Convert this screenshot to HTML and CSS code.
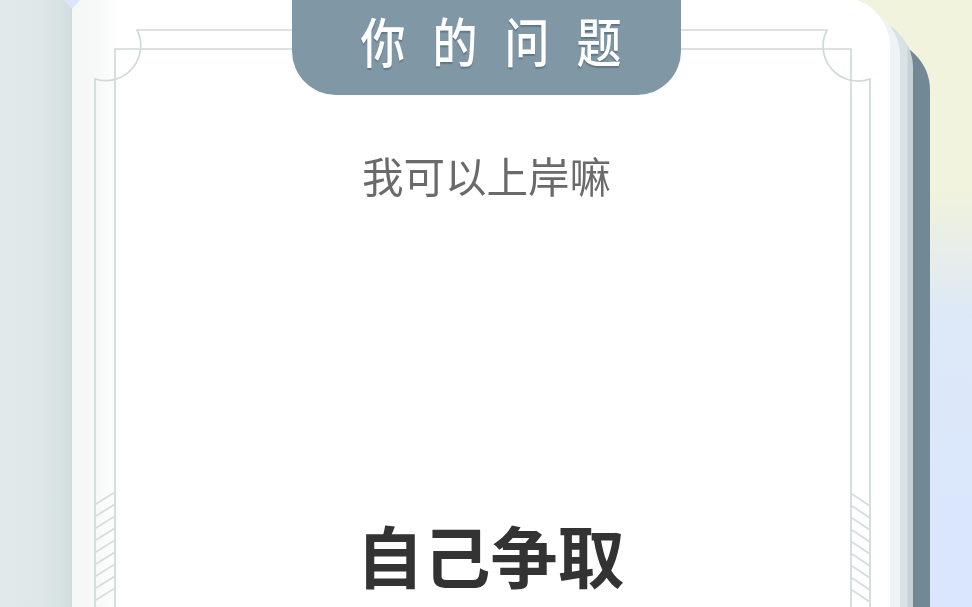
FILE: index.html
```html
<!DOCTYPE html>
<html lang="zh">
<head>
<meta charset="utf-8">
<title>你的问题</title>
<link rel="stylesheet" href="styles.css">
</head>
<body>
<div class="scene">
  <div class="spine"></div>
  <div class="notch"></div>
  <div class="layer layer-dark"></div>
  <div class="layer layer-gray"></div>
  <div class="layer layer-light"></div>
  <main class="page">
    <svg class="frame" viewBox="0 0 972 607" width="972" height="607" aria-hidden="true">
      <path d="M95 607V79A35 35 0 0 0 137 30H827A35 35 0 0 0 870 79V607" />
      <path d="M115 607V49H851V607" />
      <g class="hatch">
        <path d="M96 504L115 492M96 516L115 504M96 528L115 516M96 540L115 528M96 552L115 540M96 564L115 552M96 576L115 564M96 588L115 576M96 600L115 588" />
        <path d="M852 494L870 506M852 506L870 518M852 518L870 530M852 530L870 542M852 542L870 554M852 554L870 566M852 566L870 578M852 578L870 590M852 590L870 602" />
      </g>
    </svg>
    <header class="tab"><h1>你的问题</h1></header>
    <p class="question">我可以上岸嘛</p>
    <p class="answer">自己争取</p>
  </main>
</div>
</body>
</html>
```
FILE: styles.css
```css
* { box-sizing: border-box; }
html, body { margin: 0; height: 100%; overflow: hidden; }
body { font-family: "Noto Sans CJK SC", "Noto Sans", sans-serif; }
.scene {
  position: relative;
  width: 972px;
  height: 607px;
  overflow: hidden;
  background: linear-gradient(180deg, #f1f3dc 0, #f1f3dc 190px, #dde8f8 320px, #d9e6fd 607px);
}
.spine {
  position: absolute;
  left: 0;
  top: 0;
  width: 72px;
  height: 607px;
  background: linear-gradient(90deg, #e1e9ea 0, #dfe8e9 40px, #d2dedf 70px, #cbd8d9 72px);
}
.notch {
  position: absolute;
  left: 64px;
  top: 0;
  width: 16px;
  height: 9px;
  background: #d9e6fd;
  clip-path: polygon(0 0, 100% 0, 50% 100%);
  z-index: 2;
}
.layer {
  position: absolute;
  left: 72px;
  height: 800px;
  border-top-right-radius: 50px;
}
.layer-dark { top: 40px; width: 858px; background: linear-gradient(90deg, #708693, #728995); }
.layer-gray {
  top: 18px;
  width: 841px;
  background: linear-gradient(90deg, #d8e2e4 0, #d8e2e4 835px, #c5d2d6 836px);
}
.layer-light { top: 6px; width: 828px; background: #f0f3f5; }
.page {
  position: absolute;
  left: 72px;
  top: -3px;
  width: 818px;
  height: 700px;
  padding-left: 20px;
  border-top-right-radius: 50px;
  background: linear-gradient(90deg, #f6f8f8 0, #f7f8f8 23px, #fff 46px);
  display: flex;
  flex-direction: column;
  align-items: center;
  overflow: hidden;
}
.frame {
  position: absolute;
  left: -72px;
  top: 3px;
  fill: none;
  stroke: #d0d9db;
  stroke-width: 1.7;
  filter: blur(.3px);
}
.hatch path { stroke: #d6dddd; stroke-width: 1.8; }
.tab {
  position: relative;
  align-self: flex-start;
  margin-left: 200px;
  width: 389px;
  height: 98px;
  background: #8098a6;
  border-radius: 0 0 44px 44px;
  display: flex;
  justify-content: center;
  align-items: center;
  padding: 0 0 10px 36px;
}
.tab h1 {
  margin: 0;
  color: #fff;
  font-size: 45px;
  line-height: 60px;
  font-weight: 500;
  letter-spacing: 27px;
  transform: scale(1, 1.18);
  text-shadow: 0 1px 1px rgba(60, 80, 95, .45);
  white-space: nowrap;
  filter: blur(.3px);
}
.question {
  position: relative;
  margin: 50px 9px 0 0;
  font-size: 41.5px;
  line-height: 60px;
  color: #6a6a6a;
  filter: blur(.4px);
}
.answer {
  position: relative;
  margin: 307px 1px 0 0;
  font-size: 67px;
  line-height: 84px;
  font-weight: 700;
  color: #333;
  filter: blur(.4px);
}
```
